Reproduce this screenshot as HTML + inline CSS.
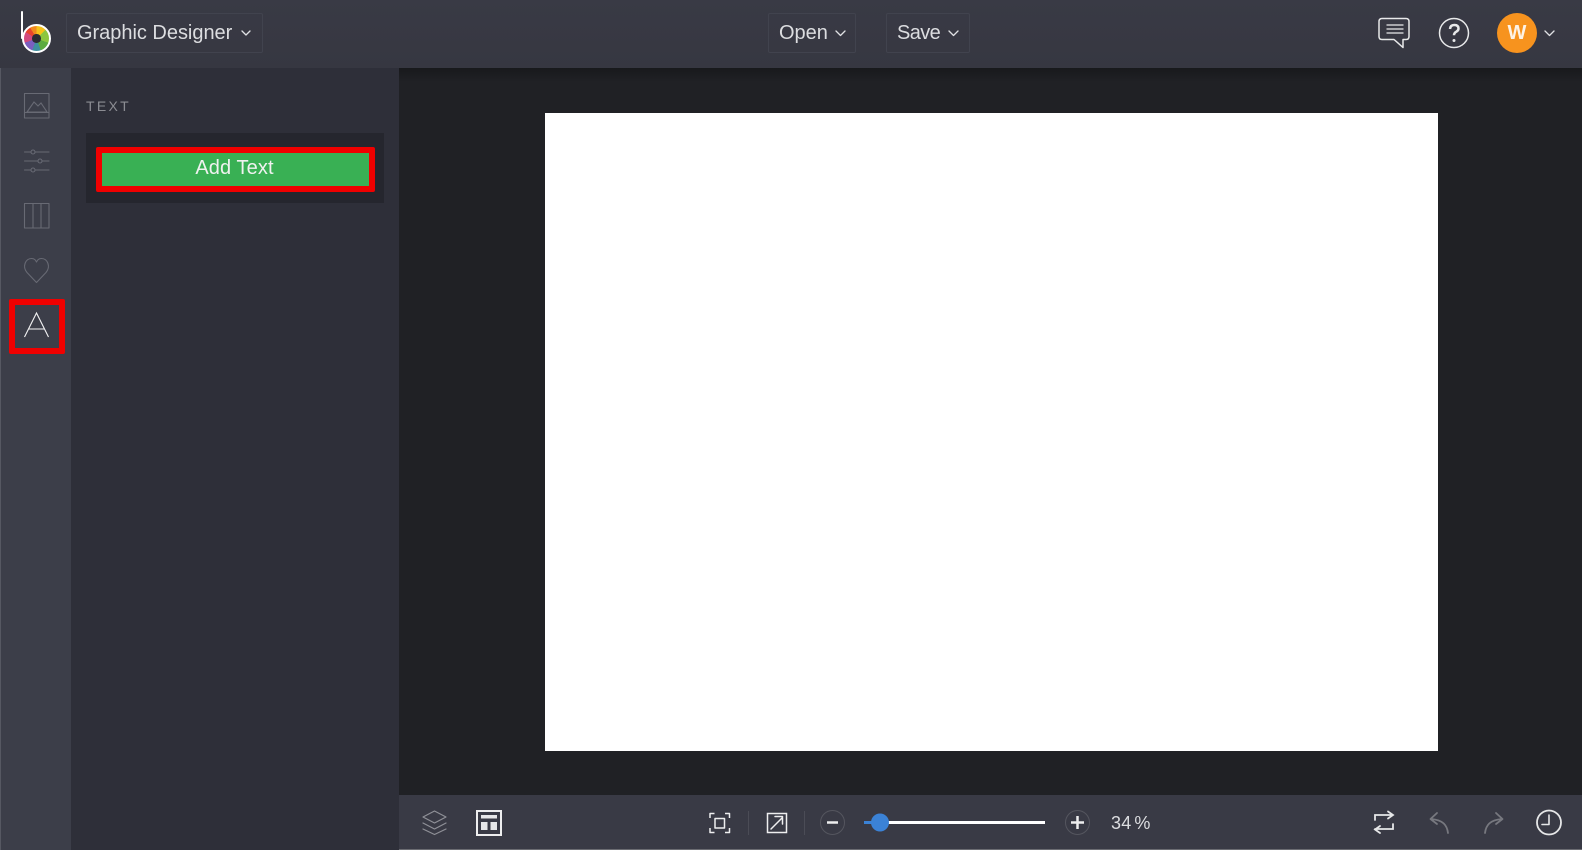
<!DOCTYPE html>
<html><head><meta charset="utf-8"><style>
html,body{margin:0;padding:0;width:1582px;height:850px;overflow:hidden;background:#202125;font-family:"Liberation Sans",sans-serif}
div{position:absolute;box-sizing:border-box}
svg{position:absolute;left:0;top:0}
.t{white-space:nowrap;line-height:24px;color:#dcdde0;font-size:20px}
.b{border:1px solid #41434e;border-radius:2px;height:40px;top:13px}
</style></head><body>
<div style="left:0;top:0;width:1582px;height:68px;background:linear-gradient(#393a45,#363741)"></div>
<div style="left:0;top:68px;width:1582px;height:14px;background:linear-gradient(#18191c,#202125)"></div>
<div style="left:0;top:68px;width:71px;height:782px;background:#3c3e49;border-left:1px solid #565862"></div>
<div style="left:71px;top:68px;width:328px;height:782px;background:#2e2f39"></div>
<div style="left:545px;top:113px;width:893px;height:638px;background:#fff"></div>
<div style="left:399px;top:795px;width:1183px;height:54px;background:#393a45"></div>
<div style="left:399px;top:849px;width:1183px;height:1px;background:#6b6c72"></div>
<div class="b" style="left:66px;width:197px"></div>
<div class="t" style="left:77px;top:21px;letter-spacing:-.02px">Graphic Designer</div>
<div class="b" style="left:768px;width:88px"></div>
<div class="t" style="left:779px;top:21px">Open</div>
<div class="b" style="left:886px;width:84px"></div>
<div class="t" style="left:897px;top:21px;letter-spacing:-.6px">Save</div>
<div class="t" style="left:86px;top:94px;font-size:14px;letter-spacing:2.3px;color:#8b8c92">TEXT</div>
<div style="left:86px;top:133px;width:298px;height:70px;background:#25262e"></div>
<div style="left:96px;top:147px;width:279px;height:45px;background:#39b054;border:6px solid #f00000;border-radius:2px"></div>
<div class="t" style="left:95px;top:156px;width:279px;text-align:center;color:#f0f2f0;letter-spacing:.1px">Add Text</div>
<div style="left:9px;top:299px;width:56px;height:55px;border:6px solid #f00000;border-radius:2px"></div>
<div style="left:1497px;top:13px;width:40px;height:40px;border-radius:50%;background:#f7931e"></div>
<div class="t" style="left:1497px;top:21px;width:40px;text-align:center;color:#fdf3e6;font-weight:bold;font-size:20px">W</div>
<div class="t" style="left:1111px;top:811px;font-size:18px;letter-spacing:.3px;word-spacing:-2.500px">34 %</div>
<div style="left:22px;top:24px;width:29px;height:29px;border-radius:50%;background:conic-gradient(#f5c21a 0 45deg,#8cc63f 45deg 110deg,#5cab3f 110deg 160deg,#3f8f9f 160deg 200deg,#7a5fc0 200deg 250deg,#d24a7e 250deg 300deg,#e8452c 300deg 330deg,#f08a1e 330deg 360deg);border:2px solid #fff"></div>
<div style="left:32px;top:34px;width:8.500px;height:8.500px;border-radius:50%;background:#2b2c33"></div>
<svg width="1582" height="850" viewBox="0 0 1582 850" fill="none" stroke-linecap="round" stroke-linejoin="round">
<path d="M22 12V38" stroke="#fff" stroke-width="2"/>
<g stroke="#e0e1e4" stroke-width="1.300">
<path d="M242 31l4 4 4-4M836 31l4.500 4.500 4.500-4.500M949 31l4.500 4.500 4.500-4.500M1545 31l4.500 4.500 4.500-4.500"/>
</g>
<g stroke="#e8e9ea" stroke-width="1.500">
<path d="M1382 18.500h24q3 0 3 3v15q0 3-3 3h-3v8l-9-8h-12q-3 0-3-3v-15q0-3 3-3z"/>
<path d="M1387 25h16M1387 29h16M1387 33h16" stroke-width="1.300"/>
<circle cx="1454" cy="33" r="14.500"/>
</g>
<path d="M1450 29q.3-4 4.300-4 4.200 0 4.200 3.500 0 2-2.200 3.200-2.300 1.300-2.300 3.600" stroke="#e8e9ea" stroke-width="2.500" stroke-linecap="butt"/>
<circle cx="1454" cy="40.500" r="1.500" fill="#e8e9ea"/>
<g stroke="#686a74" stroke-width="1.100">
<rect x="24.500" y="93.500" width="24.500" height="24.500"/>
<path d="M27 112l7-10 4 4 3-3 6 9zM24.500 112.500h24.500" stroke-linejoin="miter"/>
<path d="M24.500 152h24.500M24.500 161h24.500M24.500 170h24.500"/>
<circle cx="33" cy="152" r="2" fill="#3c3e49"/><circle cx="40" cy="161" r="2" fill="#3c3e49"/><circle cx="33" cy="170" r="2" fill="#3c3e49"/>
<rect x="24.500" y="203.500" width="24.500" height="24.500"/>
<path d="M33 203.500V228M41 203.500V228"/>
<path d="M36.500 282.500l-9.500-10c-5-6-1.500-14 4.500-14 3 0 4 1.500 5 3.500 1-2 2-3.500 5-3.500 6 0 9.500 8 4.500 14z"/>
</g>
<path d="M24.500 337L36.500 313l12 24M28.500 329h16" stroke="#f4f4f5" stroke-width="1.100" stroke-linejoin="miter" stroke-linecap="butt"/>
<g stroke="#8f9097" stroke-width="1.200">
<path d="M434.500 811l11.500 6-11.500 6-11.500-6z"/>
<path d="M423 823l11.500 6 11.500-6M423 829l11.500 5.500 11.500-5.500"/>
</g>
<g stroke="#eeeeef" fill="none" stroke-width="1.500">
<rect x="477" y="811" width="24" height="24" stroke-width="2" stroke-linejoin="miter"/>
<path d="M710 818v-4.500h4.500M725 813.500h4.500v4.500M729.500 828v4.500h-4.500M714.500 832.500h-4.500V828" stroke-linecap="butt"/>
<rect x="715" y="818.500" width="9.500" height="9.500"/>
<rect x="767.500" y="813.500" width="19" height="19" stroke-linejoin="miter"/>
<path d="M771 829l11.500-11.500M775 816.500h7.500V824"/>
</g>
<g fill="#e6e6e8" stroke="none"><rect x="481" y="815" width="16" height="3.500"/><rect x="481" y="822" width="6.500" height="8"/><rect x="490.500" y="822" width="6.500" height="8"/></g>
<path d="M748.500 811v24M804.500 811v24" stroke="#4b4c56" stroke-width="1" stroke-linecap="butt"/>
<circle cx="832.500" cy="822.500" r="12" stroke="#55565f" stroke-width="1"/>
<circle cx="1077.500" cy="822.500" r="12" stroke="#55565f" stroke-width="1"/>
<path d="M827 822.500h11M1071 822.500h13M1077.500 816v13" stroke="#eeeeef" stroke-width="2.500" stroke-linecap="butt"/>
<path d="M880 822.500h165" stroke="#fff" stroke-width="3" stroke-linecap="butt"/>
<path d="M864 822.500h16" stroke="#3b82d6" stroke-width="3" stroke-linecap="butt"/>
<circle cx="880" cy="822.500" r="9" fill="#3b82d6"/>
<g stroke="#e6e7e8" stroke-width="1.800">
<path d="M1375 820v-5h18M1388 811.500l5 3.500-5 3.500M1393 824v5h-18M1380 826l-5 3.500 5 3.500" stroke-linejoin="miter"/>
<circle cx="1549" cy="822.500" r="12"/>
<path d="M1549 815v9.500h-7" stroke-width="1.600"/>
</g>
<g stroke="#77787f" stroke-width="1.800">
<path d="M1448 833c-1-8-5-13-17-14M1437 813l-6.500 6 6.500 5"/>
<path d="M1485 833c1-8 5-13 17-14M1496 813l6.500 6-6.500 5"/>
</g>
</svg>
</body></html>
